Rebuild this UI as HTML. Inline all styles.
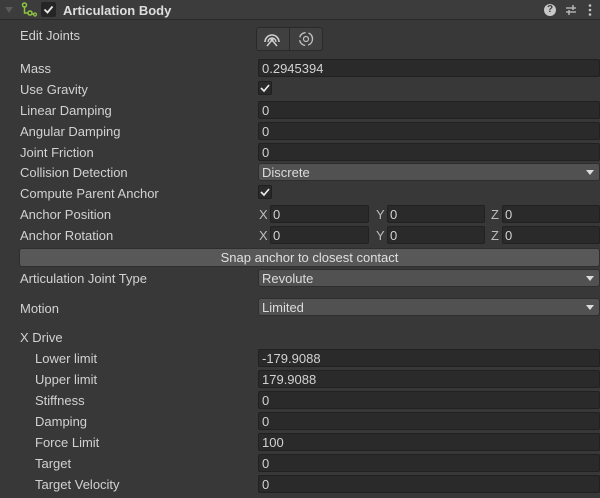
<!DOCTYPE html>
<html><head><meta charset="utf-8"><style>
*{margin:0;padding:0;box-sizing:border-box}
body{width:600px;height:498px;background:#383838;font-family:"Liberation Sans",sans-serif;font-size:13px;color:#d2d2d2;position:relative;overflow:hidden}
.a{position:absolute}
.hdr{left:0;top:0;width:600px;height:20px;background:#3c3c3c;border-bottom:1px solid #2a2a2a}
.lbl{left:20px;line-height:20px;white-space:nowrap}
.f{left:258px;width:342px;height:18px;background:#2a2a2a;border:1px solid #212121;border-radius:2px;padding-left:3px;line-height:17px;color:#d2d2d2}
.dd{left:258px;width:342px;height:18px;background:#515151;border:1px solid #2e2e2e;border-radius:3px;padding-left:3px;line-height:17px;color:#dcdcdc}
.dd:after{content:"";position:absolute;right:5px;top:6px;border-left:4px solid transparent;border-right:4px solid transparent;border-top:5px solid #dcdcdc}
.cb{left:258px;width:14px;height:14px;background:#2a2a2a;border:1px solid #1f1f1f;border-radius:2px}
.v{height:18px;background:#2a2a2a;border:1px solid #212121;border-radius:2px;padding-left:2px;line-height:17px}
.vl{line-height:19px;color:#bdbdbd}
</style></head><body>
<div class="a hdr"></div>
<div class="a" style="left:5px;top:7px;border-left:4px solid transparent;border-right:4px solid transparent;border-top:6px solid #5a5a5a"></div>
<svg class="a" style="left:21px;top:2px" width="16" height="16" viewBox="0 0 16 16"><circle cx="3.5" cy="3" r="2" fill="none" stroke="#8cc540" stroke-width="1.5"/><path d="M3.5 5v6h4" stroke="#8cc540" stroke-width="1.5" fill="none"/><circle cx="9" cy="11" r="2" fill="none" stroke="#8cc540" stroke-width="1.5"/><path d="M11 12h2.5" stroke="#8cc540" stroke-width="1.5"/><circle cx="14" cy="12.5" r="1.5" fill="none" stroke="#8cc540" stroke-width="1.2"/></svg>
<div class="a" style="left:41px;top:2px;width:15px;height:15px;background:#252525;border-radius:2px"></div>
<svg class="a" style="left:41px;top:2px" width="15" height="15"><path d="M3.5 7.5l3 3 5-6" stroke="#e8e8e8" stroke-width="1.8" fill="none"/></svg>
<div class="a" style="left:63px;top:1px;line-height:19px;font-weight:bold;font-size:13px;color:#dedede">Articulation Body</div>
<div class="a" style="left:544px;top:4px;width:12px;height:12px;border-radius:6px;background:#c8c8c8;color:#3c3c3c;font-size:10px;font-weight:bold;text-align:center;line-height:12px">?</div>
<svg class="a" style="left:565px;top:3px" width="12" height="14"><path d="M1 5h10M1 9h10M8 2v5M4 7v5" stroke="#c4c4c4" stroke-width="1.3"/></svg>
<svg class="a" style="left:588px;top:3px" width="4" height="14"><circle cx="2" cy="2.5" r="1.3" fill="#c4c4c4"/><circle cx="2" cy="7" r="1.3" fill="#c4c4c4"/><circle cx="2" cy="11.5" r="1.3" fill="#c4c4c4"/></svg>

<div class="a lbl" style="top:26px">Edit Joints</div>
<div class="a" style="left:256px;top:27px;width:67px;height:24px;background:#404040;border:1px solid #2a2a2a;border-radius:3px"></div>
<div class="a" style="left:289px;top:28px;width:1px;height:22px;background:#2a2a2a"></div>
<svg class="a" style="left:262px;top:30px" width="20" height="18" viewBox="0 0 20 18"><path d="M3 12a7 7 0 0 1 14 0" stroke="#d0d0d0" stroke-width="1.6" fill="none"/><path d="M6 12a4 4 0 0 1 8 0" stroke="#d0d0d0" stroke-width="1.4" fill="none"/><circle cx="10" cy="10" r="1.6" fill="#d0d0d0"/><path d="M10 10l-5 6M10 10l5 6" stroke="#d0d0d0" stroke-width="1.4"/></svg>
<svg class="a" style="left:296px;top:30px" width="20" height="18" viewBox="0 0 20 18"><circle cx="10" cy="9" r="6.5" stroke="#c0c0c0" stroke-width="1.4" fill="none" stroke-dasharray="8 3"/><circle cx="10" cy="9" r="2.5" stroke="#c0c0c0" stroke-width="1.2" fill="none"/></svg>

<div class="a lbl" style="top:59px">Mass</div><div class="a f" style="top:59px">0.2945394</div>
<div class="a lbl" style="top:80px">Use Gravity</div><div class="a cb" style="top:81px"></div>
<svg class="a" style="left:258px;top:81px" width="14" height="14"><path d="M3 7l3 3 5-6" stroke="#e8e8e8" stroke-width="1.7" fill="none"/></svg>
<div class="a lbl" style="top:101px">Linear Damping</div><div class="a f" style="top:101px">0</div>
<div class="a lbl" style="top:122px">Angular Damping</div><div class="a f" style="top:122px">0</div>
<div class="a lbl" style="top:143px">Joint Friction</div><div class="a f" style="top:143px">0</div>
<div class="a lbl" style="top:163px">Collision Detection</div><div class="a dd" style="top:163px">Discrete</div>
<div class="a lbl" style="top:184px">Compute Parent Anchor</div><div class="a cb" style="top:185px"></div>
<svg class="a" style="left:258px;top:185px" width="14" height="14"><path d="M3 7l3 3 5-6" stroke="#e8e8e8" stroke-width="1.7" fill="none"/></svg>

<div class="a lbl" style="top:205px">Anchor Position</div>
<div class="a vl" style="left:259px;top:205px">X</div><div class="a v" style="left:270px;top:205px;width:99px">0</div>
<div class="a vl" style="left:376px;top:205px">Y</div><div class="a v" style="left:387px;top:205px;width:98px">0</div>
<div class="a vl" style="left:491px;top:205px">Z</div><div class="a v" style="left:502px;top:205px;width:98px">0</div>
<div class="a lbl" style="top:226px">Anchor Rotation</div>
<div class="a vl" style="left:259px;top:226px">X</div><div class="a v" style="left:270px;top:226px;width:99px">0</div>
<div class="a vl" style="left:376px;top:226px">Y</div><div class="a v" style="left:387px;top:226px;width:98px">0</div>
<div class="a vl" style="left:491px;top:226px">Z</div><div class="a v" style="left:502px;top:226px;width:98px">0</div>

<div class="a" style="left:19px;top:248px;width:581px;height:19px;background:#585858;border:1px solid #2e2e2e;border-radius:3px;text-align:center;line-height:18px;color:#e0e0e0">Snap anchor to closest contact</div>
<div class="a lbl" style="top:269px">Articulation Joint Type</div><div class="a dd" style="top:269px">Revolute</div>
<div class="a lbl" style="top:299px">Motion</div><div class="a dd" style="top:298px">Limited</div>

<div class="a lbl" style="top:328px">X Drive</div>
<div class="a lbl" style="left:35px;top:349px">Lower limit</div><div class="a f" style="top:349px">-179.9088</div>
<div class="a lbl" style="left:35px;top:370px">Upper limit</div><div class="a f" style="top:370px">179.9088</div>
<div class="a lbl" style="left:35px;top:391px">Stiffness</div><div class="a f" style="top:391px">0</div>
<div class="a lbl" style="left:35px;top:412px">Damping</div><div class="a f" style="top:412px">0</div>
<div class="a lbl" style="left:35px;top:433px">Force Limit</div><div class="a f" style="top:433px">100</div>
<div class="a lbl" style="left:35px;top:454px">Target</div><div class="a f" style="top:454px">0</div>
<div class="a lbl" style="left:35px;top:475px">Target Velocity</div><div class="a f" style="top:475px">0</div>
</body></html>
